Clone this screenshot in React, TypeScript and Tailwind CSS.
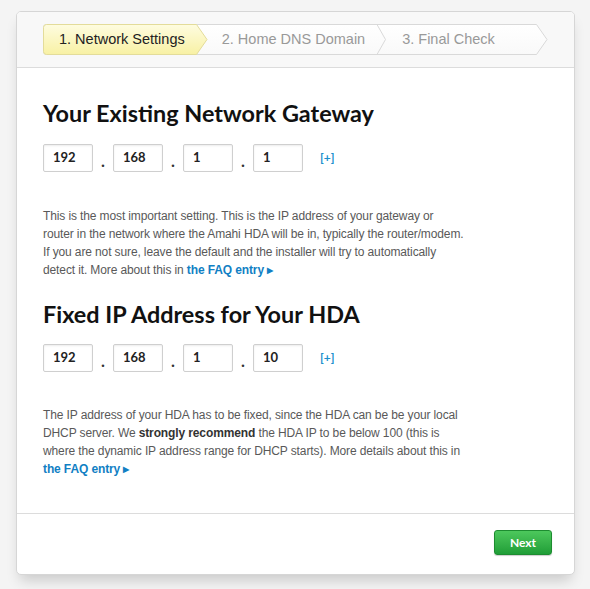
import React from "react";

const HEAD = { fontFamily: "Lato, 'Open Sans', sans-serif" };
const BODY = { fontFamily: "'Liberation Sans', Arial, sans-serif" };

function Steps() {
  return (
    <div className="relative h-[31px] w-[505px]">
      <svg className="absolute inset-0" width="505" height="31" viewBox="0 0 505 31">
        <defs>
          <linearGradient id="yel" x1="0" y1="0" x2="0" y2="1">
            <stop offset="0" stopColor="#fefce0" />
            <stop offset="1" stopColor="#f8f1a4" />
          </linearGradient>
          <linearGradient id="wht" x1="0" y1="0" x2="0" y2="1">
            <stop offset="0" stopColor="#ffffff" />
            <stop offset="1" stopColor="#f9f9f9" />
          </linearGradient>
        </defs>
        <path d="M3.5 0.5 H493.5 L504 15.5 L493.5 30.5 H3.5 Q0.5 30.5 0.5 27.5 V3.5 Q0.5 0.5 3.5 0.5 Z" fill="url(#wht)" stroke="#d9d9d9" />
        <path d="M3.5 0.5 H153.5 L164 15.5 L153.5 30.5 H3.5 Q0.5 30.5 0.5 27.5 V3.5 Q0.5 0.5 3.5 0.5 Z" fill="url(#yel)" stroke="#e3dc9a" />
        <path d="M334 0.5 L342.5 15.5 L334 30.5" fill="none" stroke="#d9d9d9" />
      </svg>
      <div className="relative flex h-full items-center text-[14.5px]" style={BODY}>
        <span className="ml-[16px] text-[#222]">1. Network Settings</span>
        <span className="ml-[37px] text-[#999]">2. Home DNS Domain</span>
        <span className="ml-[37px] text-[#999]">3. Final Check</span>
      </div>
    </div>
  );
}

function IpRow({ parts }: { parts: string[] }) {
  return (
    <div className="flex h-[28px] items-center">
      {parts.map((p, i) => (
        <React.Fragment key={i}>
          {i > 0 && (
            <span className="flex h-[28px] w-[20px] items-end justify-center pb-[1px] text-[14px] font-bold leading-[18px] text-[#333]">
              .
            </span>
          )}
          <div
            className="flex h-[28px] w-[50px] items-center rounded-[2px] border border-[#cfcfcf] bg-white pl-[9px] text-[13px] font-bold text-[#222] shadow-[inset_0_1px_2px_rgba(0,0,0,0.08)]"
            style={HEAD}
          >
            {p}
          </div>
        </React.Fragment>
      ))}
      <span className="ml-[17px] text-[12px] font-bold text-[#1a8fcd]" style={HEAD}>
        [+]
      </span>
    </div>
  );
}

function Faq() {
  return (
    <a className="font-bold text-[#1180c4]">
      the FAQ entry <span className="text-[8px] align-[1px]">▶</span>
    </a>
  );
}

export default function App() {
  return (
    <div className="min-h-[589px] bg-[#f4f4f4] pl-[16px] pt-[11px]">
      <div className="w-[559px] overflow-hidden rounded-[5px] border border-[#d6d6d6] bg-white shadow-[0_9px_14px_-4px_rgba(0,0,0,0.18)]">
        <div className="border-b border-[#dcdcdc] bg-[#f8f8f8] pb-[12px] pl-[26px] pt-[12px]">
          <Steps />
        </div>

        <div className="px-[26px] pb-[34px] pt-[30px]">
          <h2 className="text-[23.4px] font-bold leading-[30px] text-[#111]" style={HEAD}>
            Your Existing Network Gateway
          </h2>
          <div className="mt-[16px]">
            <IpRow parts={["192", "168", "1", "1"]} />
          </div>
          <p className="mt-[35px] text-[12px] leading-[18px] tracking-[-0.12px] text-[#595959]" style={BODY}>
            This is the most important setting. This is the IP address of your gateway or
            <br />
            router in the network where the Amahi HDA will be in, typically the router/modem.
            <br />
            If you are not sure, leave the default and the installer will try to automatically
            <br />
            detect it. More about this in <Faq />
          </p>

          <h2 className="mt-[19px] text-[23.4px] font-bold leading-[30px] text-[#111]" style={HEAD}>
            Fixed IP Address for Your HDA
          </h2>
          <div className="mt-[15px]">
            <IpRow parts={["192", "168", "1", "10"]} />
          </div>
          <p className="mt-[34px] text-[12px] leading-[18px] tracking-[-0.12px] text-[#595959]" style={BODY}>
            The IP address of your HDA has to be fixed, since the HDA can be be your local
            <br />
            DHCP server. We <b className="text-[#333]">strongly recommend</b> the HDA IP to be below 100 (this is
            <br />
            where the dynamic IP address range for DHCP starts). More details about this in
            <br />
            <Faq />
          </p>
        </div>

        <div className="flex justify-end border-t border-[#dcdcdc] pb-[19px] pr-[22px] pt-[16px]">
          <button
            className="h-[25px] w-[58px] rounded-[3px] border border-[#1d8c30] bg-gradient-to-b from-[#4cc85c] to-[#1f9e37] text-[12px] font-bold text-white shadow-[0_1px_1px_rgba(0,0,0,0.2)]"
            style={HEAD}
          >
            Next
          </button>
        </div>
      </div>
    </div>
  );
}
